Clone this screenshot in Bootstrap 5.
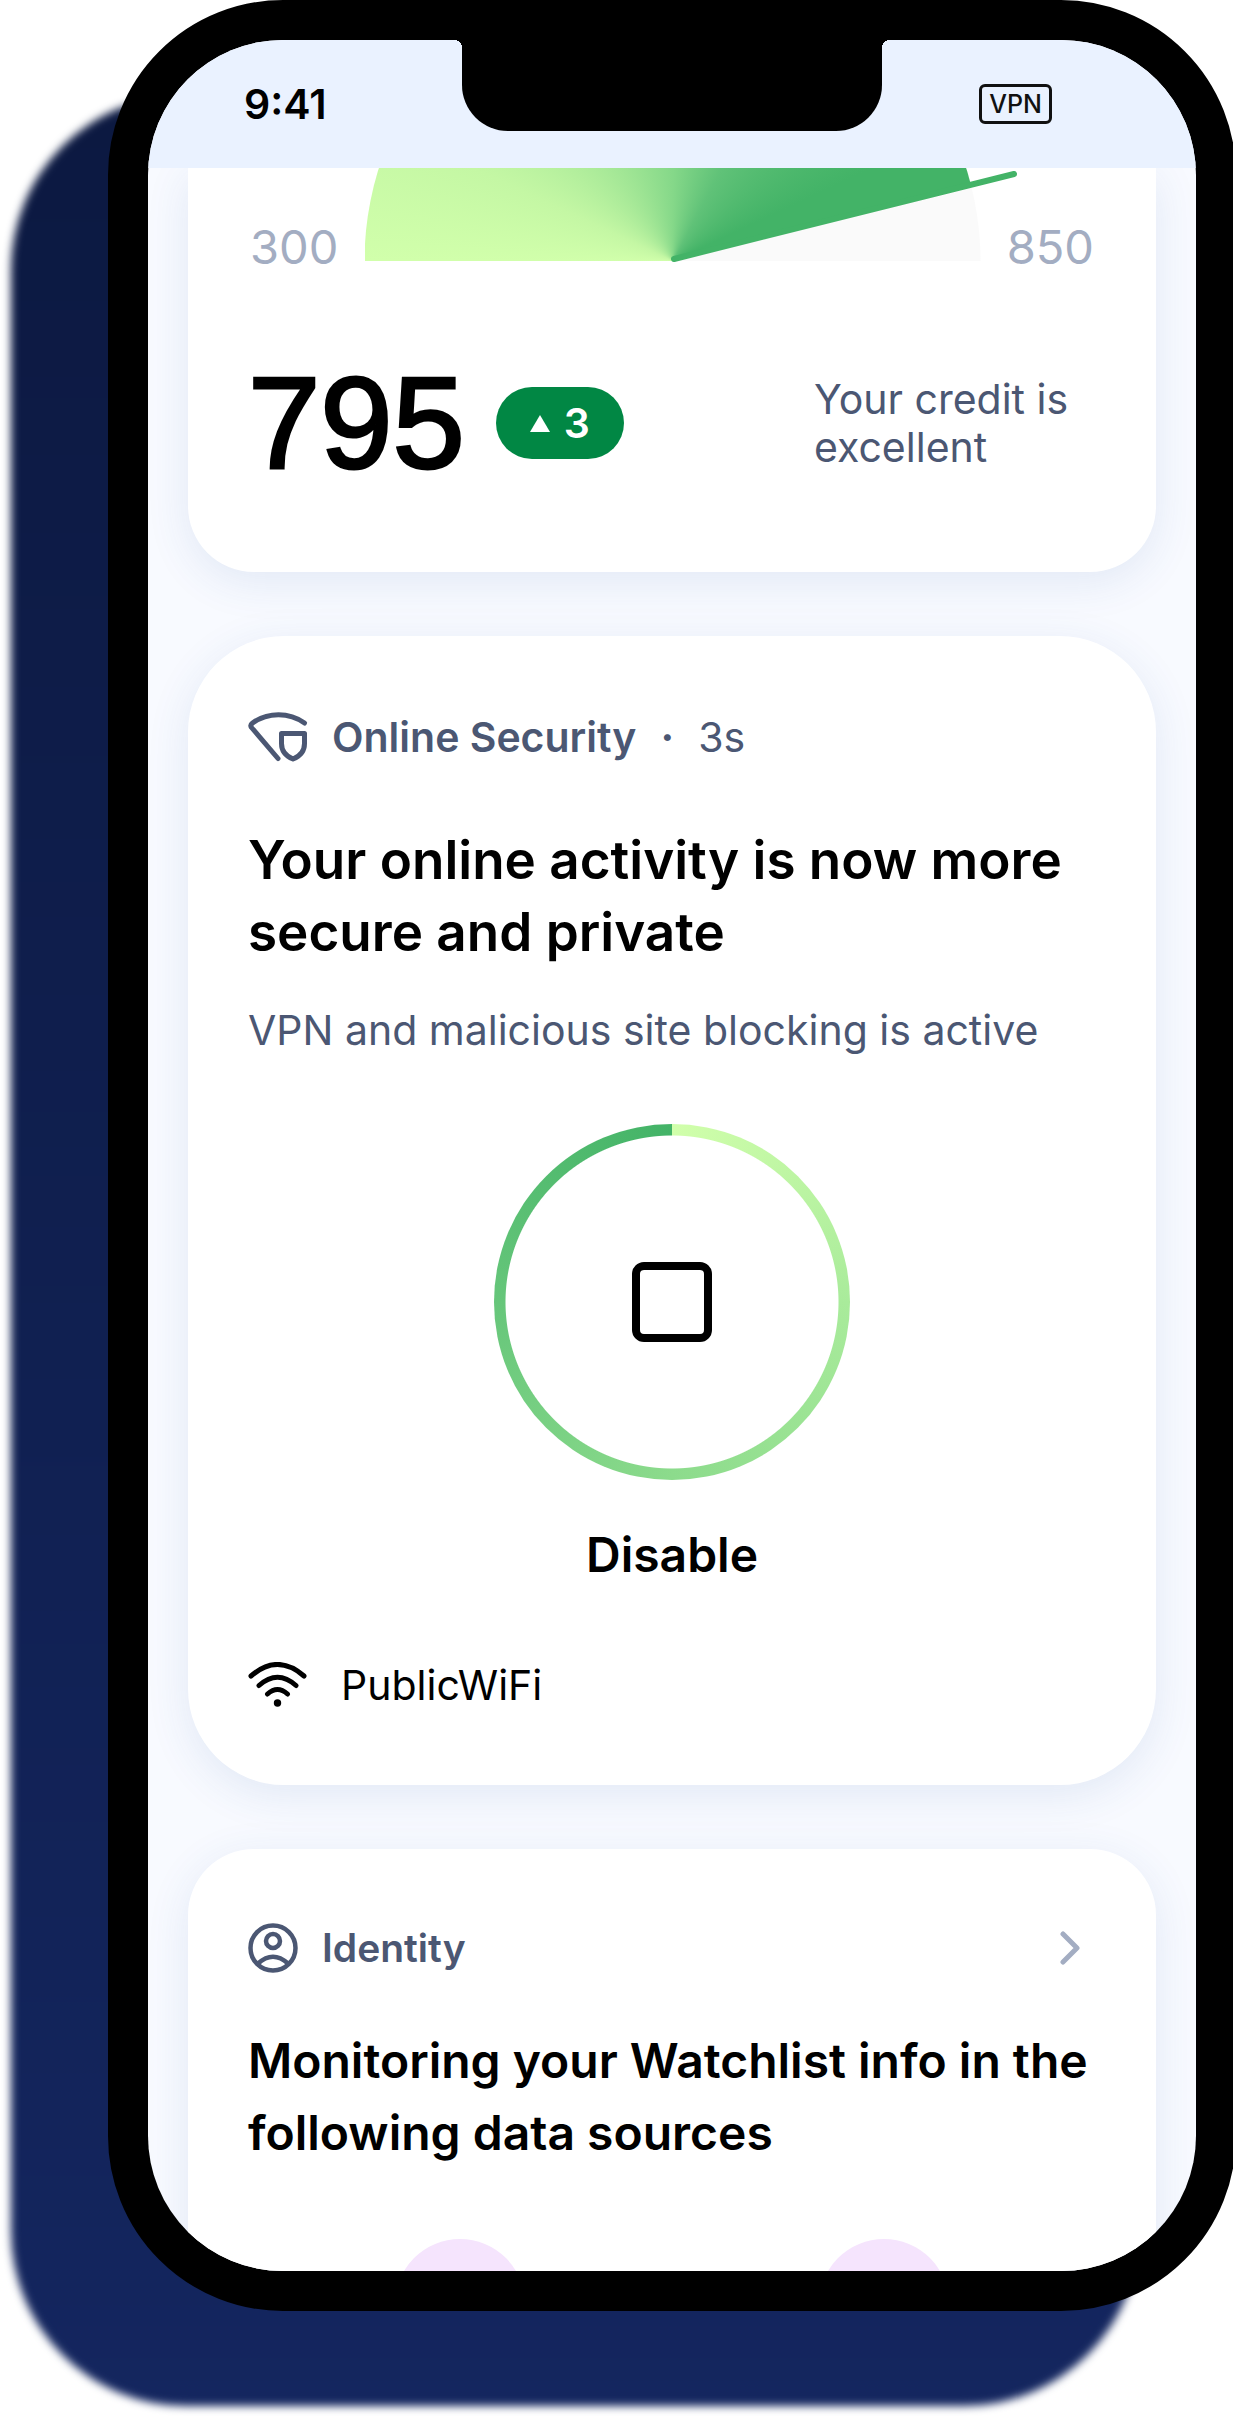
<!DOCTYPE html>
<html lang="en">
<head>
<meta charset="utf-8">
<meta name="viewport" content="width=device-width, initial-scale=1">
<title>Security dashboard</title>
<link href="https://cdn.jsdelivr.net/npm/bootstrap@5.3.0/dist/css/bootstrap.min.css" rel="stylesheet">
<style>
  :root { --slate: #4b5773; --pale: #a3adc2; --mint: #d1ffab; --leaf: #43b367; }
  body { font-family: Inter, "Liberation Sans", sans-serif; font-size: 41px; line-height: 48px; color: #000; background: #fff; overflow-x: hidden; }
  .stage { padding: 0 0 106px 108px; overflow: hidden; isolation: isolate; }
  .phone { margin-right: -3px; border: 40px solid #000; border-radius: 175px; background: #000; }
  .phone-shadow { inset: 95px 97px -95px -97px; margin: -40px; border-radius: 175px; background: linear-gradient(#0c1941, #14265f); filter: blur(4px); z-index: -1; }
  .screen { border-radius: 135px; overflow: hidden; background: #f8faff; }
  .status { height: 128px; padding: 0 144px 0 96px; background: #eaf2ff; z-index: 1; }
  .status-time { font-weight: 600; }
  .vpn-tag { border: 3px solid #111; border-radius: 6px; font-size: 25px; line-height: 34px; font-weight: 500; padding: 0 7px; color: #111; }
  .notch { top: 0; left: 50%; width: 420px; height: 91px; margin-left: -210px; background: #000; border-radius: 0 0 46px 46px; }
  .notch::before, .notch::after { content: ""; position: absolute; top: 0; width: 8px; height: 8px; }
  .notch::before { right: 100%; background: radial-gradient(circle at 0 100%, transparent 8px, #000 8px); }
  .notch::after { left: 100%; background: radial-gradient(circle at 100% 100%, transparent 8px, #000 8px); }
  .feed { padding: 0 40px; display: grid; gap: 64px; }
  .tile { background: #fff; padding: 0 60px; box-shadow: 0 10px 44px rgba(50, 90, 160, .11); min-width: 0; }
  .tile-score { border-radius: 0 0 66px 66px; padding-bottom: 101px; }
  .tile-security { border-radius: 96px; padding-top: 76px; padding-bottom: 76px; }
  .tile-identity { border-radius: 66px 66px 0 0; padding-top: 74px; }
  .slate { color: var(--slate); }
  .scale-row { padding: 0 2px; }
  .limit { font-size: 47px; line-height: 48px; height: 38px; color: var(--pale); }
  .gauge { width: 616px; height: 93px; }
  .gauge-fan { height: 100%; clip-path: circle(308px at 50% 100%);
    background: conic-gradient(from 270deg at 50% 100%, var(--mint) 0deg, #c4f7a4 25deg, #85d889 90deg, #60c278 118deg, var(--leaf) 155deg, var(--leaf) 166deg, #fafafa 166deg); }
  .gauge svg { inset: 0; overflow: visible; }
  .score-row { margin-top: 114px; gap: 31px; }
  .score { font-family: "Liberation Sans", Arial, sans-serif; font-size: 130px; line-height: 96px; -webkit-text-stroke: 3px #000; }
  .delta { width: 128px; height: 72px; background: #018744; color: #fff; gap: 14px; font-weight: 600; }
  .verdict { width: 282px; }
  .tile-title { font-weight: 600; line-height: 72px; margin: 0; }
  .title-lg { font-size: 53px; margin-top: 62px; }
  .title-md { font-size: 48px; margin-top: 52px; }
  .tile-note { margin: 38px 0 0; }
  .toggle { margin-top: 70px; border: 0; background: none; padding: 0; gap: 47px; color: #000; font-size: 48px; line-height: 56px; font-weight: 600; }
  .ring { width: 356px; height: 356px; border-radius: 50%; background: radial-gradient(closest-side, #fff 166px, transparent 167px), conic-gradient(var(--mint), #a9eb9b 25%, #8cdb8c 50%, #66c67a 75%, var(--leaf)); }
  .stop-box { width: 80px; height: 80px; border: 8px solid #000; border-radius: 12px; }
  .network { margin-top: 78px; gap: 34px; }
  .tile-link { font-size: 39px; }
  .chevron { color: var(--pale); }
  .sources { margin-top: 70px; height: 32px; overflow: hidden; }
  .source-dot { width: 130px; height: 130px; border-radius: 50%; background: #f5e4fd; }
  .line-icon { fill: none; stroke: currentColor; stroke-linecap: round; stroke-linejoin: round; flex: none; }
</style>
</head>
<body>
<div class="stage">
  <div class="phone position-relative">
    <div class="phone-shadow position-absolute"></div>
    <div class="screen position-relative">
      <header class="status position-relative d-flex align-items-center justify-content-between">
        <span class="status-time">9:41</span>
        <span class="vpn-tag">VPN</span>
        <div class="notch position-absolute"></div>
      </header>
      <main class="feed">
        <section class="tile tile-score">
          <div class="scale-row d-flex justify-content-between align-items-end">
            <span class="limit">300</span>
            <div class="gauge position-relative">
              <div class="gauge-fan"></div>
              <svg class="position-absolute" width="616" height="93" viewBox="0 0 616 93" aria-hidden="true"><path d="M309 91 649 6" stroke="#43b367" stroke-width="6" stroke-linecap="round"/></svg>
            </div>
            <span class="limit">850</span>
          </div>
          <div class="score-row d-flex align-items-center">
            <span class="score">795</span>
            <span class="delta rounded-pill d-flex align-items-center justify-content-center">
              <svg width="20" height="17" viewBox="0 0 20 17" fill="#fff" aria-hidden="true"><path d="M10 0 20 17H0z"/></svg>3
            </span>
            <span class="verdict slate ms-auto">Your credit is excellent</span>
          </div>
        </section>

        <section class="tile tile-security">
          <div class="d-flex align-items-center gap-4 slate">
            <svg class="line-icon" width="60" height="50" viewBox="0 0 60 50" stroke-width="5" aria-hidden="true"><path d="M56.500 11C41 0 20 0 4.500 11c-2 1.500-2 3-1 4.500L30 46.500M33.500 21.500h23v10c0 7-4 12.500-11.500 15.500-7.500-3-11.500-8.500-11.500-15.500z"/></svg>
            <span class="fw-semibold">Online Security</span>
            <span class="fw-bold">·</span>
            <span>3s</span>
          </div>
          <h2 class="tile-title title-lg">Your online activity is now more secure and private</h2>
          <p class="tile-note slate">VPN and malicious site blocking is active</p>
          <button type="button" class="toggle d-flex flex-column align-items-center mx-auto">
            <span class="ring d-flex align-items-center justify-content-center"><span class="stop-box"></span></span>
            <span>Disable</span>
          </button>
          <div class="network d-flex align-items-center">
            <svg class="line-icon" width="59" height="46" viewBox="0 0 59 46" stroke-width="5" aria-hidden="true"><path d="M3 14Q29.500-9 56 14M11 23.500Q29.500 7 48 23.500M19.500 32Q29.500 23 39.500 32"/><circle cx="29.500" cy="41" r="3.700" fill="currentColor" stroke="none"/></svg>
            <span>PublicWiFi</span>
          </div>
        </section>

        <section class="tile tile-identity">
          <a href="#identity" class="tile-link d-flex align-items-center gap-4 slate text-decoration-none">
            <svg class="line-icon" width="50" height="50" viewBox="0 0 50 50" stroke-width="4.500" aria-hidden="true"><circle cx="25" cy="25" r="22.500"/><circle cx="25" cy="18" r="7"/><path d="M10 40.500Q25 27 40 40.500"/></svg>
            <span class="fw-semibold">Identity</span>
            <svg class="line-icon chevron ms-auto me-3" width="20" height="34" viewBox="0 0 20 34" stroke-width="5" aria-hidden="true"><path d="M3 3 17 17 3 31"/></svg>
          </a>
          <h2 class="tile-title title-md">Monitoring your Watchlist info in the following data sources</h2>
          <div class="sources row gx-0">
            <div class="col-6"><div class="source-dot mx-auto"></div></div>
            <div class="col-6"><div class="source-dot mx-auto"></div></div>
          </div>
        </section>
      </main>
    </div>
  </div>
</div>
<script src="https://cdn.jsdelivr.net/npm/bootstrap@5.3.0/dist/js/bootstrap.bundle.min.js"></script>
</body>
</html>
